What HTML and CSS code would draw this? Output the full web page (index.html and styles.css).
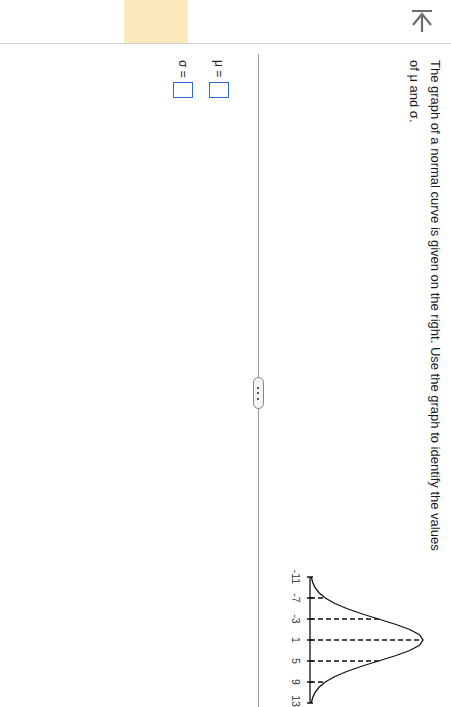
FILE: index.html
```html
<!DOCTYPE html>
<html>
<head>
<meta charset="utf-8">
<link rel="stylesheet" href="styles.css">
</head>
<body>
<header class="topbar">
  <div class="highlight"></div>
  <button class="collapse" aria-label="Collapse">
    <svg width="24" height="26" viewBox="0 0 24 26"><path d="M2 3H22M3 17L12 6L21 17M12 6V24" fill="none" stroke="#6d6d6d" stroke-width="2.2"/></svg>
  </button>
</header>
<div class="stage">
  <div class="page">
    <section class="top">
      <p class="question">The graph of a normal curve is given on the right. Use the graph to identify the values of μ and σ.</p>
      <svg class="graph" width="143" height="170" viewBox="0 0 143 170">
        <g fill="none" stroke="#111" stroke-width="1.3">
          <path d="M13 141H139"/>
          <path d="M13 138V144M34 138V144M55 138V144M76 138V144M97 138V144M118 138V144M139 138V144"/>
          <path stroke-dasharray="5 3" d="M34 141V125.7M55 141V72.5M76 141V28M97 141V72.5M118 141V125.7"/>
          <path d="M13 139.75L18.25 138.4L23.5 136L28.75 132L34 125.7L39.25 116.6L44.5 104.3L49.75 89.3L55 72.5L60.25 55.7L65.5 41.3L70.75 31.5L76 28L81.25 31.5L86.5 41.3L91.75 55.7L97 72.5L102.25 89.3L107.5 104.3L112.75 116.6L118 125.7L123.25 132L128.5 136L133.75 138.4L139 139.75"/>
        </g>
        <g class="labels" text-anchor="middle">
          <text x="13" y="159">-11</text>
          <text x="34" y="159">-7</text>
          <text x="55" y="159">-3</text>
          <text x="76" y="159">1</text>
          <text x="97" y="159">5</text>
          <text x="118" y="159">9</text>
          <text x="137" y="159">13</text>
        </g>
      </svg>
    </section>
    <div class="divider">
      <span class="handle"><i></i><i></i><i></i></span>
    </div>
    <section class="answers">
      <div class="row"><span class="label">μ =</span><span class="box"></span></div>
      <div class="row"><span class="label">σ =</span><span class="box"></span></div>
    </section>
  </div>
</div>
</body>
</html>
```
FILE: styles.css
```css
html, body {
  margin: 0;
  padding: 0;
  background: #fff;
  overflow: hidden;
}
body {
  width: 451px;
  height: 707px;
  font-family: "Liberation Sans", Arial, sans-serif;
  color: #222;
}
.topbar {
  height: 43px;
  border-bottom: 1px solid #cfcfd3;
  display: flex;
  align-items: flex-start;
}
.highlight {
  margin-left: 124px;
  width: 64px;
  height: 43px;
  background: #f9e9bb;
}
.collapse {
  margin: 8px 17px 0 auto;
  padding: 0;
  border: 0;
  background: none;
  width: 24px;
  height: 26px;
  display: block;
}
.collapse svg { display: block; }
.stage {
  width: 451px;
  height: 663px;
  overflow: hidden;
}
.page {
  width: 663px;
  height: 451px;
  transform-origin: top left;
  transform: rotate(90deg) translateY(-100%);
}
.top {
  display: flex;
  height: 192px;
}
.question {
  margin: 0;
  padding: 5px 0 0 16px;
  width: 500px;
  font-size: 13px;
  line-height: 21px;
  color: #1a1a1a;
}
.graph {
  display: block;
  margin-left: auto;
}
.labels {
  font-family: "Liberation Sans", Arial, sans-serif;
  font-size: 10.5px;
  fill: #333;
}
.divider {
  margin-left: 10px;
  border-top: 1px solid #969ca3;
  position: relative;
}
.handle {
  position: absolute;
  left: 323px;
  top: -6px;
  width: 30px;
  height: 9px;
  border: 1px solid #7b8490;
  border-radius: 6px;
  background: #f3f4f6;
  display: flex;
  align-items: center;
  justify-content: center;
  gap: 3.5px;
}
.handle i {
  width: 2px;
  height: 2px;
  background: #555;
  display: block;
}
.answers {
  padding: 29px 0 0 16px;
  display: flex;
  flex-direction: column;
  gap: 16px;
}
.row {
  display: flex;
  align-items: center;
  height: 20px;
  font-size: 12px;
}
.label {
  width: 22px;
}
.box {
  width: 14px;
  height: 18px;
  border: 1px solid #2f6ad3;
  display: block;
}
```
